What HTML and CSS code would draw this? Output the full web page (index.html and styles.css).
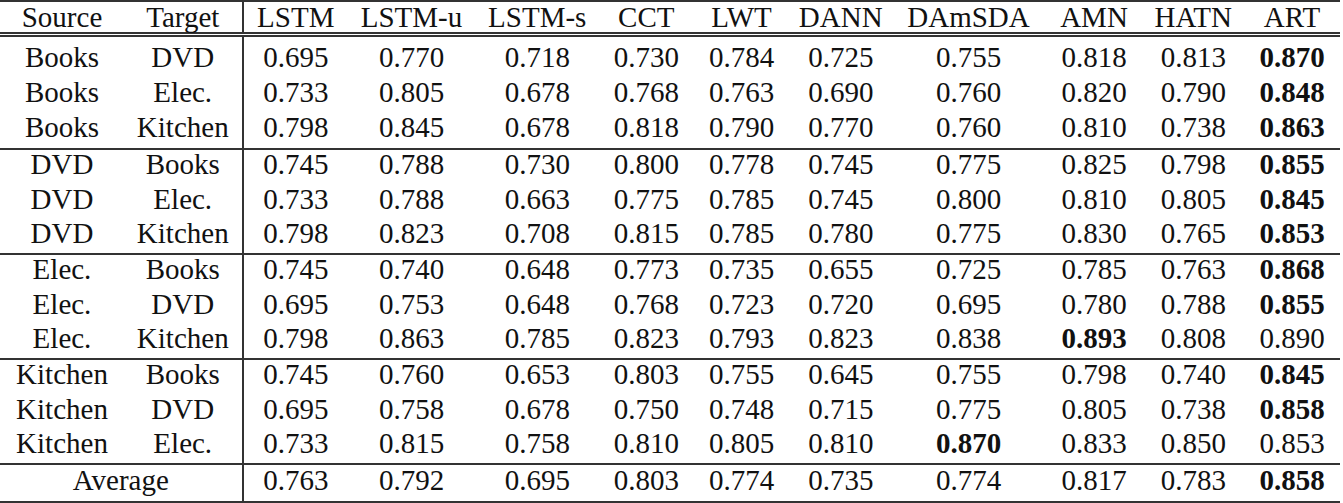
FILE: index.html
```html
<!DOCTYPE html>
<html>
<head>
<meta charset="utf-8">
<link rel="stylesheet" href="styles.css">
</head>
<body>
<table class="results">
  <colgroup>
    <col class="w-src"><col class="w-tgt"><col class="w-lstm"><col class="w-lstmu"><col class="w-lstms"><col class="w-cct"><col class="w-lwt"><col class="w-dann"><col class="w-damsda"><col class="w-amn"><col class="w-hatn"><col class="w-art">
  </colgroup>
  <thead>
    <tr>
      <th>Source</th>
      <th class="c-tgt">Target</th>
      <th>LSTM</th>
      <th>LSTM-u</th>
      <th>LSTM-s</th>
      <th>CCT</th>
      <th>LWT</th>
      <th>DANN</th>
      <th>DAmSDA</th>
      <th>AMN</th>
      <th>HATN</th>
      <th>ART</th>
    </tr>
  </thead>
  <tbody class="first">
    <tr><td>Books</td><td class="c-tgt">DVD</td><td>0.695</td><td>0.770</td><td>0.718</td><td>0.730</td><td>0.784</td><td>0.725</td><td>0.755</td><td>0.818</td><td>0.813</td><td class="best">0.870</td></tr>
    <tr><td>Books</td><td class="c-tgt">Elec.</td><td>0.733</td><td>0.805</td><td>0.678</td><td>0.768</td><td>0.763</td><td>0.690</td><td>0.760</td><td>0.820</td><td>0.790</td><td class="best">0.848</td></tr>
    <tr><td>Books</td><td class="c-tgt">Kitchen</td><td>0.798</td><td>0.845</td><td>0.678</td><td>0.818</td><td>0.790</td><td>0.770</td><td>0.760</td><td>0.810</td><td>0.738</td><td class="best">0.863</td></tr>
  </tbody>
  <tbody>
    <tr><td>DVD</td><td class="c-tgt">Books</td><td>0.745</td><td>0.788</td><td>0.730</td><td>0.800</td><td>0.778</td><td>0.745</td><td>0.775</td><td>0.825</td><td>0.798</td><td class="best">0.855</td></tr>
    <tr><td>DVD</td><td class="c-tgt">Elec.</td><td>0.733</td><td>0.788</td><td>0.663</td><td>0.775</td><td>0.785</td><td>0.745</td><td>0.800</td><td>0.810</td><td>0.805</td><td class="best">0.845</td></tr>
    <tr><td>DVD</td><td class="c-tgt">Kitchen</td><td>0.798</td><td>0.823</td><td>0.708</td><td>0.815</td><td>0.785</td><td>0.780</td><td>0.775</td><td>0.830</td><td>0.765</td><td class="best">0.853</td></tr>
  </tbody>
  <tbody>
    <tr><td>Elec.</td><td class="c-tgt">Books</td><td>0.745</td><td>0.740</td><td>0.648</td><td>0.773</td><td>0.735</td><td>0.655</td><td>0.725</td><td>0.785</td><td>0.763</td><td class="best">0.868</td></tr>
    <tr><td>Elec.</td><td class="c-tgt">DVD</td><td>0.695</td><td>0.753</td><td>0.648</td><td>0.768</td><td>0.723</td><td>0.720</td><td>0.695</td><td>0.780</td><td>0.788</td><td class="best">0.855</td></tr>
    <tr><td>Elec.</td><td class="c-tgt">Kitchen</td><td>0.798</td><td>0.863</td><td>0.785</td><td>0.823</td><td>0.793</td><td>0.823</td><td>0.838</td><td class="best">0.893</td><td>0.808</td><td>0.890</td></tr>
  </tbody>
  <tbody>
    <tr><td>Kitchen</td><td class="c-tgt">Books</td><td>0.745</td><td>0.760</td><td>0.653</td><td>0.803</td><td>0.755</td><td>0.645</td><td>0.755</td><td>0.798</td><td>0.740</td><td class="best">0.845</td></tr>
    <tr><td>Kitchen</td><td class="c-tgt">DVD</td><td>0.695</td><td>0.758</td><td>0.678</td><td>0.750</td><td>0.748</td><td>0.715</td><td>0.775</td><td>0.805</td><td>0.738</td><td class="best">0.858</td></tr>
    <tr><td>Kitchen</td><td class="c-tgt">Elec.</td><td>0.733</td><td>0.815</td><td>0.758</td><td>0.810</td><td>0.805</td><td>0.810</td><td class="best">0.870</td><td>0.833</td><td>0.850</td><td>0.853</td></tr>
  </tbody>
  <tbody class="last">
    <tr><td colspan="2" class="c-tgt">Average</td><td>0.763</td><td>0.792</td><td>0.695</td><td>0.803</td><td>0.774</td><td>0.735</td><td>0.774</td><td>0.817</td><td>0.783</td><td class="best">0.858</td></tr>
  </tbody>
</table>
</body>
</html>
```

FILE: styles.css
```css
html, body {
  margin: 0;
  padding: 0;
  background: #fff;
}

.results {
  border-collapse: collapse;
  table-layout: fixed;
  width: 1340px;
  font-family: "Liberation Serif", "Times New Roman", serif;
  font-size: 29px;
  color: #111;
  border-top: 2px solid #333;
  border-bottom: 2px solid #333;
}

.w-src { width: 124px; }
.w-tgt { width: 118.5px; }
.w-lstm { width: 105.5px; }
.w-lstmu { width: 127px; }
.w-lstms { width: 124.5px; }
.w-cct { width: 93.5px; }
.w-lwt { width: 97px; }
.w-dann { width: 101.5px; }
.w-damsda { width: 154px; }
.w-amn { width: 97px; }
.w-hatn { width: 101.5px; }
.w-art { width: 96px; }

.results th,
.results td {
  padding: 0;
  text-align: center;
  font-weight: normal;
  white-space: nowrap;
  line-height: 30px;
}

.results tbody td {
  padding-bottom: 5px;
  line-height: 28px;
}

.results thead tr { height: 33px; }
.results tbody tr { height: 35px; }
.results tbody.first tr:first-child { height: 42.5px; }
.results tbody.first tr:first-child td { padding-top: 5px; }
.results tbody.first tr:last-child { height: 36.5px; }
.results tbody.last tr { height: 38px; }

.results thead th {
  border-bottom: 5px double #333;
}

.results tbody + tbody tr:first-child td {
  border-top: 2px solid #333;
}

.results .c-tgt {
  border-right: 2px solid #333;
}

.results .best {
  font-weight: bold;
}
```
